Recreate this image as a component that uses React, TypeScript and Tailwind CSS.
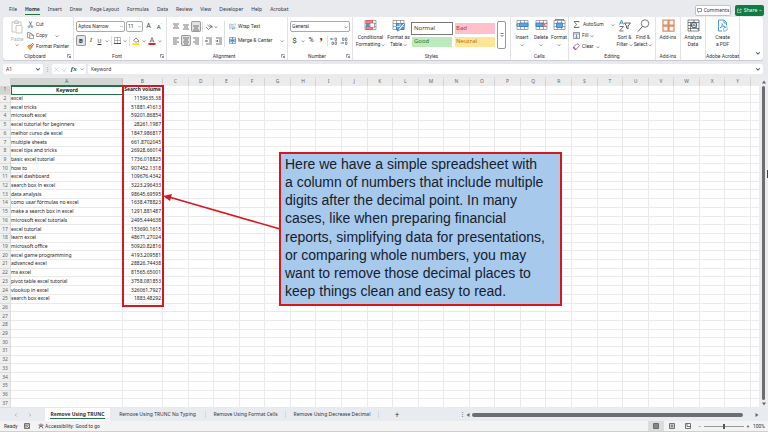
import React from "react";

const rows: [string, string][] = [
  ["excel", "1159635.38"],
  ["excel tricks", "51881.41613"],
  ["microsoft excel", "59201.86854"],
  ["excel tutorial for beginners", "28261.1987"],
  ["melhor curso de excel", "1847.986817"],
  ["multiple sheets", "661.8702045"],
  ["excel tips and tricks", "26928.66014"],
  ["basic excel tutorial", "1736.018825"],
  ["how to", "907452.1318"],
  ["excel dashboard", "109676.4342"],
  ["search box in excel", "3223.296433"],
  ["data analysis", "98645.69595"],
  ["como usar fórmulas no excel", "1638.478823"],
  ["make a search box in excel", "1291.881487"],
  ["microsoft excel tutorials", "2495.444638"],
  ["excel tutorial", "153690.1615"],
  ["learn excel", "48671.27024"],
  ["microsoft office", "50920.82816"],
  ["excel game programming", "4193.209581"],
  ["advanced excel", "28826.74438"],
  ["ms excel", "81565.65001"],
  ["pivot table excel tutorial", "3758.081853"],
  ["vlookup in excel", "326061.7927"],
  ["search box excel", "1883.48292"],
];

const letters = "CDEFGHIJKLMNOPQRSTUVWXY".split("");
const menuTabs = ["File", "Home", "Insert", "Draw", "Page Layout", "Formulas", "Data", "Review", "View", "Developer", "Help", "Acrobat"];
const noteLines = [
  "Here we have a simple spreadsheet with",
  "a column of numbers that include multiple",
  "digits after the decimal point. In many",
  "cases, like when preparing financial",
  "reports, simplifying data for presentations,",
  "or comparing whole numbers, you may",
  "want to remove those decimal places to",
  "keep things clean and easy to read.",
];

type SvgProps = { className?: string; box?: string; children: React.ReactNode };

function Svg({ className = "size-2.5", box = "0 0 20 20", children }: SvgProps) {
  return (
    <svg viewBox={box} className={`shrink-0 ${className}`} fill="none" stroke="#555" strokeWidth="1.6" aria-hidden="true">
      {children}
    </svg>
  );
}

function Caret({ className = "size-1" }: { className?: string }) {
  return (
    <Svg className={className} box="0 0 8 8">
      <path d="M1.500 3 4 5.500 6.500 3" strokeWidth="1.400" />
    </Svg>
  );
}

function Group({ className, label, launcher, children }: { className: string; label?: string; launcher?: boolean; children: React.ReactNode }) {
  return (
    <section aria-label={label} className={`flex shrink-0 flex-col border-r border-[#e3e3e3] ${className}`}>
      <div className="flex h-[35px]">{children}</div>
      <div className="flex h-2 items-center">
        <span className="flex-1 text-center whitespace-nowrap">{label}</span>
        {launcher && (
          <button aria-label={`${label} settings`} className="pr-0.5">
            <Svg className="size-1" box="0 0 10 10">
              <path d="M1 9V1h8M4 4l5 5M9 4v5H4" />
            </Svg>
          </button>
        )}
      </div>
    </section>
  );
}

function Slot({ label, className = "w-[10px]", active, children }: { label: string; className?: string; active?: boolean; children: React.ReactNode }) {
  return (
    <button
      aria-label={label}
      className={`flex h-[11px] shrink-0 items-center justify-center rounded-xs ${active ? "bg-[#e4e4e4] ring-1 ring-[#9a9a9a] ring-inset" : ""} ${className}`}
    >
      {children}
    </button>
  );
}

function Big({ icon, lines, caret, className }: { icon: React.ReactNode; lines: string[]; caret?: boolean; className: string }) {
  return (
    <button className={`flex shrink-0 flex-col items-center pt-0.5 whitespace-nowrap ${className}`}>
      {icon}
      <span className="mt-0.5 leading-[7px]">{lines[0]}</span>
      <span className="flex h-[7px] items-center gap-px leading-[7px]">
        {lines[1]}
        {caret && <Caret />}
      </span>
    </button>
  );
}

function LinesIcon({ d }: { d: string }) {
  return (
    <Svg className="size-2" box="0 0 16 16">
      <path d={d} />
    </Svg>
  );
}

function Divider() {
  return <span className="mx-px h-2.5 w-px shrink-0 bg-[#dedede]" />;
}

function TableIcon({ children }: { children?: React.ReactNode }) {
  return (
    <Svg className="size-[13px]" box="0 0 26 26">
      <path d="M2 3h22v18H2zM2 9h22M2 15h22M9 3v18M17 3v18" stroke="#777" strokeWidth="1.3" />
      {children}
    </Svg>
  );
}

function Ribbon() {
  return (
    <div className="mr-[5px] ml-[3px] flex h-[43px] rounded-[3px] bg-white font-[Roboto,sans-serif] shadow-[0_1px_1px_#c9cbd0]">
      <Group className="w-[71px]" label="Clipboard" launcher>
        <button className="flex w-6 flex-col items-center pt-[3px] pl-1 text-[#b5b5b5]" disabled>
          <Svg className="h-[14px] w-3" box="0 0 24 28">
            <path d="M8 24H2V4h18v6M7 4c0-4 8-4 8 0v3H7zM10 11h12v15H10z" stroke="#b9b9b9" />
          </Svg>
          <span className="mt-0.5">Paste</span>
          <Caret />
        </button>
        <div className="flex flex-col pt-[2px]">
          <button className="flex h-[11px] items-center gap-0.5">
            <Svg className="size-[7px]" box="0 0 16 16">
              <path d="M5 1 10 11M11 1 6 11" stroke="#555" />
              <circle cx="4.500" cy="13" r="2" stroke="#2b7cd3" />
              <circle cx="11.500" cy="13" r="2" stroke="#2b7cd3" />
            </Svg>
            Cut
          </button>
          <button className="flex h-[11px] items-center gap-0.5">
            <Svg className="size-[7px]" box="0 0 16 16">
              <path d="M5 13H1V1h5l3 2M6 4h5l4 4v7H6zM11 4v4h4" strokeWidth="1.3" />
            </Svg>
            Copy
            <span className="w-1" />
            <Caret />
          </button>
          <button className="flex h-[11px] items-center gap-0.5 whitespace-nowrap">
            <Svg className="size-[7px]" box="0 0 16 16">
              <path d="M2 7l5-3 5 5-4 5c-3 1-6-3-6-7z" fill="#f2a24a" stroke="#d9822b" />
              <path d="M8 5l5-4 2 2-4 5z" fill="#fff" stroke="#444" />
            </Svg>
            Format Painter
          </button>
        </div>
      </Group>

      <Group className="w-[93px]" label="Font" launcher>
        <div className="flex flex-col gap-[3px] pt-1 pl-0.5">
          <div className="flex h-[11px] items-center">
            <label className="relative flex w-[49px] items-center">
              <select aria-label="Font name" className="h-[11px] w-full appearance-none rounded-xs border border-[#a8a8a8] bg-white pl-px">
                <option>Aptos Narrow</option>
              </select>
              <Caret className="absolute right-0.5 size-[3px]" />
            </label>
            <label className="relative ml-px flex w-[17px] items-center">
              <select aria-label="Font size" className="h-[11px] w-full appearance-none rounded-xs border border-[#a8a8a8] bg-white pl-px">
                <option>11</option>
              </select>
              <Caret className="absolute right-0.5 size-[3px]" />
            </label>
            <Slot label="Increase font size" className="ml-0.5 w-[9px]">
              <span className="text-[7px]">A</span>
              <sup className="text-[4px] text-[#2b7cd3]">ˆ</sup>
            </Slot>
            <Slot label="Decrease font size" className="ml-px w-[9px]">
              <span className="text-[6px]">A</span>
              <sup className="text-[4px] text-[#2b7cd3]">ˇ</sup>
            </Slot>
          </div>
          <div className="flex h-[11px] items-center">
            <Slot label="Bold" active><b className="text-[6px]">B</b></Slot>
            <Slot label="Italic"><i className="font-['Liberation_Serif',serif] text-[7px]">I</i></Slot>
            <Slot label="Underline" className="w-[7px]"><u className="text-[6px]">U</u></Slot>
            <Slot label="Underline styles" className="w-[7px]"><Caret /></Slot>
            <Divider />
            <Slot label="Borders" className="w-[9px]">
              <Svg className="size-[7px]" box="0 0 14 14">
                <path d="M1 1h12v12H1zM7 1v12M1 7h12" stroke="#888" strokeWidth="1.200" />
                <path d="M0 13h14" stroke="#333" />
              </Svg>
            </Slot>
            <Slot label="Border styles" className="w-[6px]"><Caret /></Slot>
            <Divider />
            <Slot label="Fill color" className="w-[9px]">
              <Svg className="size-2" box="0 0 16 16">
                <path d="M3 7l5-5 5 5-5 4zM13 7v4" strokeWidth="1.200" />
                <path d="M1 14h14" stroke="#fff000" strokeWidth="4" />
              </Svg>
            </Slot>
            <Slot label="Fill colors" className="w-[7px]"><Caret /></Slot>
            <Slot label="Font color" className="w-[9px]">
              <Svg className="size-2" box="0 0 16 16">
                <path d="M4 11 8 1l4 10M5 8h6" strokeWidth="1.400" />
                <path d="M1 14h14" stroke="#e8202a" strokeWidth="4" />
              </Svg>
            </Slot>
            <Slot label="Font colors" className="w-[7px]"><Caret /></Slot>
          </div>
        </div>
      </Group>

      <Group className="w-[121px]" label="Alignment" launcher>
        <div className="flex w-[57px] flex-col gap-[3px] pt-1 pl-1">
          <div className="flex items-center">
            <Slot label="Top align"><LinesIcon d="M2 2h12M4 6h8M2 10h12" /></Slot>
            <Slot label="Middle align"><LinesIcon d="M2 4h12M4 8h8M2 12h12" /></Slot>
            <Slot label="Bottom align" active><LinesIcon d="M2 6h12M4 10h8M2 14h12" /></Slot>
            <Divider />
            <Slot label="Orientation">
              <Svg className="size-2" box="0 0 16 16">
                <path d="M2 8l4 4M5 4l6 5M9 3l3 4M6 14l8-8M14 10V6h-4" strokeWidth="1.300" />
              </Svg>
            </Slot>
            <Slot label="Orientation options" className="w-1"><Caret /></Slot>
          </div>
          <div className="flex items-center">
            <Slot label="Align left"><LinesIcon d="M2 2h12M2 6h8M2 10h12M2 14h8" /></Slot>
            <Slot label="Center" active><LinesIcon d="M2 2h12M4 6h8M2 10h12M4 14h8" /></Slot>
            <Slot label="Align right"><LinesIcon d="M2 2h12M6 6h8M2 10h12M6 14h8" /></Slot>
            <Divider />
            <Slot label="Decrease indent">
              <LinesIcon d="M2 2h12M8 6h6M8 10h6M2 14h12M6 8H1M3 6 1 8l2 2" />
            </Slot>
            <Slot label="Increase indent">
              <LinesIcon d="M2 2h12M8 6h6M8 10h6M2 14h12M1 8h5M4 6l2 2-2 2" />
            </Slot>
          </div>
        </div>
        <div className="mt-1 flex h-[26px] flex-1 flex-col gap-[3px] border-l border-[#dedede] pl-1">
          <button className="flex h-[11px] items-center gap-0.5">
            <Svg className="size-[7px]" box="0 0 16 16">
              <path d="M2 1v14M14 1v5" stroke="#777" strokeWidth="1.200" />
              <path d="M4 4h7M4 9h7c4 0 4 4 0 4H7M9 11l-2 2 2 2" stroke="#2b7cd3" strokeWidth="1.400" />
            </Svg>
            Wrap Text
          </button>
          <button className="flex h-[11px] items-center gap-0.5 whitespace-nowrap">
            <Svg className="size-[7px]" box="0 0 16 16">
              <path d="M1 1h14v14H1z" stroke="#777" strokeWidth="1.400" />
              <path d="M1 5h14v6H1z" fill="#a8d0f0" stroke="#2b7cd3" strokeWidth="1.200" />
              <path d="M4 8h8M8 1v4M8 11v4" stroke="#2b6ca3" />
            </Svg>
            Merge &amp; Center
            <span className="w-1" />
            <Caret />
          </button>
        </div>
      </Group>

      <Group className="w-[65px]" label="Number" launcher>
        <div className="flex flex-1 flex-col gap-[3px] px-0.5 pt-1">
          <label className="relative flex items-center">
            <select aria-label="Number format" className="h-[11px] w-full appearance-none rounded-xs border border-[#a8a8a8] bg-white pl-px">
              <option>General</option>
            </select>
            <Caret className="absolute right-0.5 size-1" />
          </label>
          <div className="flex items-center">
            <Slot label="Currency" className="w-[9px]"><span className="text-[8px]">$</span></Slot>
            <Slot label="Currency formats" className="w-[7px]"><Caret /></Slot>
            <Slot label="Percent"><span className="text-[7px]">%</span></Slot>
            <Slot label="Comma style"><b className="pt-1 font-['Liberation_Serif',serif] text-[12px]">’</b></Slot>
            <Divider />
            <Slot label="Increase decimal">
              <Svg className="size-2" box="0 0 16 16">
                <path d="M1 4h6M3 2 1 4l2 2" stroke="#2b7cd3" />
                <path d="M10 2h3v5h-3zM4 10h3v5H4zM10 10h3v5h-3z" strokeWidth="1.200" />
              </Svg>
            </Slot>
            <Slot label="Decrease decimal">
              <Svg className="size-2" box="0 0 16 16">
                <path d="M1 12h6M5 10l2 2-2 2" stroke="#2b7cd3" />
                <path d="M5 2h3v5H5zM11 2h3v5h-3zM11 10h3v5h-3z" strokeWidth="1.200" />
              </Svg>
            </Slot>
          </div>
        </div>
      </Group>

      <Group className="w-[158px]" label="Styles">
        <Big
          className="w-[33px] pl-0.5"
          lines={["Conditional", "Formatting"]}
          caret
          icon={
            <TableIcon>
              <path d="M4 3h13v6H4zM4 15h13v6H4z" fill="#f3808c" stroke="#e0505f" />
              <path d="M4 9h7v6H4z" fill="#4f8fd0" stroke="none" />
              <path d="M12 8h9v9h-9z" fill="#fff" strokeWidth="1" />
            </TableIcon>
          }
        />
        <Big
          className="w-[25px]"
          lines={["Format as", "Table"]}
          caret
          icon={
            <TableIcon>
              <path d="M9 9h15v12H9z" fill="#5aa5e6" stroke="#2b7cd3" />
              <path d="M9 15h15M16 9v12" stroke="#fff" />
              <path d="M23 8 14 18l-4 6 7-3 8-10z" fill="#fff" stroke="#2b6ca3" />
            </TableIcon>
          }
        />
        <div className="mt-1 flex h-[28px]">
          <div className="grid w-[86px] grid-cols-2 grid-rows-2 gap-px py-px pr-px font-['Open_Sans',sans-serif] text-[6px]">
            <button className="border border-[#777] bg-white pl-0.5 text-left">Normal</button>
            <button className="m-px bg-[#ffc0ca] pl-px text-left text-[#b0303f]">Bad</button>
            <button className="m-px bg-[#bdebbd] pl-0.5 text-left text-[#23702d]">Good</button>
            <button className="m-px bg-[#ffe697] pl-px text-left text-[#a86a10]">Neutral</button>
          </div>
          <button aria-label="More styles" className="flex w-[9px] items-center justify-center rounded-xs border border-[#999]">
            <Svg className="size-1" box="0 0 8 8">
              <path d="M1 1h6M1 4l3 3 3-3" />
            </Svg>
          </button>
        </div>
      </Group>

      <Group className="w-[58px]" label="Cells">
        <Big className="w-[21px] pl-px" lines={["Insert", ""]} caret icon={
          <TableIcon>
            <path d="M7 8h17v7H7z" fill="#5aa5e6" stroke="#2b7cd3" />
            <path d="M8 12H1M4 9l-3 3 3 3" stroke="#2b7cd3" />
          </TableIcon>
        } />
        <Big className="w-[18px]" lines={["Delete", ""]} caret icon={
          <TableIcon>
            <path d="M2 8h13v7H2z" fill="#5aa5e6" stroke="#2b7cd3" />
            <path d="M15 7l8 9M23 7l-8 9" stroke="#e0505f" strokeWidth="2" />
          </TableIcon>
        } />
        <Big className="w-[18px]" lines={["Format", ""]} caret icon={
          <TableIcon>
            <path d="M7 8h12v9H7z" fill="#5aa5e6" stroke="#2b7cd3" />
            <path d="M5 1h16M5 0v3M21 0v3" stroke="#2b7cd3" />
          </TableIcon>
        } />
      </Group>

      <Group className="w-[87px]" label="Editing">
        <div className="flex w-[46px] flex-col pt-0.5 pl-1">
          <button className="flex h-[11px] items-center gap-[3px]">
            <Svg className="size-[7px]" box="0 0 14 14">
              <path d="M12 3V1H2l5 6-5 6h10v-2" />
            </Svg>
            AutoSum
            <span className="w-1" />
            <Caret />
          </button>
          <button className="flex h-[11px] items-center gap-0.5">
            <Svg className="size-[7px]" box="0 0 14 14">
              <path d="M1 1h12v12H1zM1 4h12" strokeWidth="1.200" />
              <path d="M7 5v6M4 9l3 3 3-3" stroke="#2b7cd3" />
            </Svg>
            Fill
            <Caret />
          </button>
          <button className="flex h-[11px] items-center gap-0.5">
            <Svg className="size-[7px]" box="0 0 14 14">
              <path d="M1 8l7-7 5 4-7 8H4z" fill="#fff" stroke="#a040a0" />
              <path d="M1 8l5 5H4L1 10z" fill="#d070d0" stroke="#a040a0" />
            </Svg>
            Clear
            <Caret />
          </button>
        </div>
        <Big className="w-[19px]" lines={["Sort &", "Filter"]} caret icon={
          <Svg className="size-[13px]" box="0 0 26 26">
            <path d="M3 11 7 2l4 9M4 8h6" stroke="#2b7cd3" />
            <path d="M3 15h8l-8 9h8" stroke="#555" />
            <path d="M13 8h12l-5 6v6l-3-2v-4z" strokeWidth="1.800" />
          </Svg>
        } />
        <Big className="w-[18px]" lines={["Find &", "Select"]} caret icon={
          <Svg className="size-[13px]" box="0 0 26 26">
            <circle cx="16" cy="9" r="7.500" />
            <path d="M11 15 2 25" strokeWidth="2" />
          </Svg>
        } />
      </Group>

      <Group className="w-[25px]" label="Add-ins">
        <Big className="w-[24px]" lines={["Add-ins", ""]} icon={
          <Svg className="size-[13px]" box="0 0 26 26">
            <path d="M2 2h10v10H2zM14 2h10v10H14zM2 14h10v10H2zM14 14h10v10H14z" stroke="#e08a62" strokeWidth="2.500" />
          </Svg>
        } />
      </Group>
      <Group className="w-[25px]">
        <Big className="w-[24px]" lines={["Analyze", "Data"]} icon={
          <Svg className="size-[13px]" box="0 0 26 26">
            <path d="M2 2h22v22H2zM2 7h22M7 7v17M2 13h8M2 19h22M14 2v5" strokeWidth="1.400" />
            <circle cx="14" cy="12" r="5.500" fill="#cfe6f8" stroke="#333" />
            <path d="M18 16l6 7M12 14v-3M14 14V9M16 14v-2" stroke="#2b6ca3" />
          </Svg>
        } />
      </Group>
      <Group className="w-[34px]" label="Adobe Acrobat">
        <Big className="w-[33px]" lines={["Create", "a PDF"]} icon={
          <Svg className="size-[13px]" box="0 0 26 26">
            <path d="M12 24H5V2h11l5 5v6M16 2v6h5" stroke="#3d8ee0" strokeWidth="1.800" />
            <path d="M8 18c4-3 5-6 4-9 1 5 3 6 6 6-4 0-7 1-10 3z" stroke="#3d8ee0" strokeWidth="1.400" />
            <path d="M15 21c0-4 4-5 8-5M14 24c3 0 8 1 9-5" stroke="#3d8ee0" />
          </Svg>
        } />
      </Group>
      <button aria-label="Collapse ribbon" className="ml-auto self-end pr-0.5 pb-1">
        <Caret className="size-[6px]" />
      </button>
    </div>
  );
}

function Sheet() {
  const cols = "grid grid-cols-[11px_112px_40px_repeat(23,minmax(0,1fr))_8px]";
  const head = "block border-r border-[#d2d2d2] text-center font-normal text-[#666]";
  return (
    <div className="relative flex min-w-0 flex-1 flex-col">
      <table className="grid flex-1 grid-rows-[8px_minmax(0,1fr)] text-[5px] leading-[7px]">
        <thead className="grid">
          <tr className={`${cols} border-b border-[#c4c4c4] bg-[#ececec]`}>
            <th className={head} aria-label="Select all" />
            <th className="block border-r border-b border-[#c4c4c4] border-b-[#217346] bg-[#d3d5d4] text-center font-normal text-[#217346]">A</th>
            <th className={head}>B</th>
            {letters.map((l) => (
              <th key={l} className={head}>{l}</th>
            ))}
            <th className="block" />
          </tr>
        </thead>
        <tbody className="grid auto-rows-fr bg-white text-[#222]">
          {Array.from({ length: 37 }, (_, i) => {
            const data = i > 0 ? rows[i - 1] : undefined;
            return (
              <tr key={i} className={cols}>
                <th className={`flex items-center justify-center border-r border-b border-[#dcdcdc] font-normal text-[#666] ${i === 0 ? "bg-[#d3d5d4]" : "bg-[#f0f0f0]"}`}>{i + 1}</th>
                {i === 0 ? (
                  <td className="flex items-center justify-center font-bold outline-1 -outline-offset-1 outline-[#217346]">Keyword</td>
                ) : (
                  <td className="flex items-center border-r border-b border-[#eaeaea]">{data?.[0]}</td>
                )}
                {i === 0 ? (
                  <td className="flex items-center justify-center border-r border-b border-[#eaeaea] font-bold whitespace-nowrap">Search volume</td>
                ) : (
                  <td className="flex items-center justify-end border-r border-b border-[#eaeaea] pr-px">{data?.[1]}</td>
                )}
                {letters.map((l) => (
                  <td key={l} className="block border-r border-b border-[#eaeaea]" />
                ))}
                <td className="block border-b border-[#eaeaea]" />
              </tr>
            );
          })}
        </tbody>
      </table>

      {/* Highlight frame, pointer and note floating over the cells */}
      <div className="absolute inset-x-0 top-2 bottom-0">
        <div className="absolute -top-px left-[122px] h-[69%] w-[42px] border-2 border-[#d8161e]" />
        <svg viewBox="0 0 120 40" className="absolute top-[106px] left-[162px] h-10 w-[120px]" aria-hidden="true">
          <path d="M7 5 118 37" stroke="#d8161e" strokeWidth="1.600" />
          <path d="M1 4l9-2-2 7z" fill="#d8161e" />
        </svg>
        <aside className="absolute top-[66px] left-[279px] grid h-[154px] w-[283px] auto-rows-fr border-2 border-[#d8161e] bg-[#a6c9ec] pt-px pb-[3px] pl-1 font-['Liberation_Sans',Arial,sans-serif] text-[14px] text-[#16202c]">
          {noteLines.map((line) => (
            <span key={line} className="flex items-center whitespace-nowrap">{line}</span>
          ))}
        </aside>
      </div>
    </div>
  );
}

function Arrow({ d }: { d: string }) {
  return (
    <svg viewBox="0 0 8 8" className="size-1 shrink-0" aria-hidden="true">
      <path d={d} fill="#666" />
    </svg>
  );
}

export default function App() {
  return (
    <div className="flex min-h-screen w-full flex-col overflow-hidden bg-[#e8eaee] font-['Noto_Sans','Open_Sans',sans-serif] text-[5px] leading-[7px] text-[#333]">
      <header className="flex h-[17px] items-center pt-[3px] pr-1">
        <nav className="flex items-center gap-2 pl-[9px]" aria-label="Ribbon tabs">
          {menuTabs.map((t) => (
            <button key={t} className={`flex h-2.5 items-center border-b whitespace-nowrap ${t === "Home" ? "border-[#217346] font-bold" : "border-transparent"}`}>
              {t}
            </button>
          ))}
        </nav>
        <div className="ml-auto flex items-center gap-1">
          <button className="flex h-[11px] w-9 items-center justify-center gap-0.5 rounded-xs border border-[#c2c2c2] bg-white">
            <Svg className="size-[5px]" box="0 0 10 10"><path d="M1 1h8v6H5L3 9V7H1z" strokeWidth="1.200" /></Svg>
            Comments
          </button>
          <button className="flex h-[11px] w-[29px] items-center justify-center gap-0.5 rounded-xs bg-[#107c41] text-white">
            <svg viewBox="0 0 10 10" className="size-[5px]" fill="none" stroke="#fff" aria-hidden="true"><path d="M4 2H1v7h7V6M4 6c0-3 2-3 5-3M7 1l2 2-2 2" /></svg>
            Share
            <svg viewBox="0 0 8 8" className="size-[3px]" fill="none" stroke="#fff" aria-hidden="true"><path d="M1 2.500 4 5.500 7 2.500" strokeWidth="1.500" /></svg>
          </button>
        </div>
      </header>

      <Ribbon />

      <div className="mt-1 mr-[5px] ml-[3px] flex h-[10px] items-center">
        <label className="relative flex w-10 items-center">
          <input aria-label="Name box" defaultValue="A1" className="h-[10px] w-full rounded-xs bg-white pl-[3px]" />
          <Caret className="absolute right-0.5 size-[6px]" />
        </label>
        <span className="flex w-[9px] justify-center text-[#888]">⋮</span>
        <div className="flex h-[10px] w-[34px] items-center justify-around rounded-xs bg-white">
          <Svg className="size-[5px]" box="0 0 10 10"><path d="M1 1l8 8M9 1 1 9" stroke="#bbb" strokeWidth="1.200" /></Svg>
          <Svg className="size-[5px]" box="0 0 10 10"><path d="M1 5l3 4 5-8" stroke="#bbb" strokeWidth="1.200" /></Svg>
          <i className="font-['Liberation_Serif',serif] text-[7px] font-bold">fx</i>
          <Caret />
        </div>
        <label className="relative ml-0.5 flex flex-1 items-center">
          <input aria-label="Formula bar" defaultValue="Keyword" className="h-[10px] w-full rounded-xs bg-white pl-[3px]" />
          <Caret className="absolute right-0.5 size-[6px]" />
        </label>
      </div>

      <div className="mt-1 flex flex-1">
        <Sheet />
        <div className="relative flex w-[9px] flex-col items-center gap-0.5 bg-[#ebedf0] py-0.5">
          <Arrow d="M4 1 8 7H0z" />
          <div className="w-[3px] flex-1 rounded-full bg-[#6e6e6e]" />
          <Arrow d="M0 1h8L4 7z" />
          <span className="absolute top-[92px] right-0 h-2 w-px bg-[#444]" />
        </div>
      </div>

      <div className="flex h-[13px] items-center bg-[#e8ebf0]">
        <div className="flex w-[45px] justify-center gap-2.5">
          <Svg className="size-1" box="0 0 8 8"><path d="M5.500 1 2.500 4l3 3" stroke="#aaa" /></Svg>
          <Svg className="size-1" box="0 0 8 8"><path d="M2.500 1l3 3-3 3" stroke="#aaa" /></Svg>
        </div>
        <div className="flex h-full w-[65px] items-center justify-center bg-white">
          <button className="border-b border-[#217346] font-bold whitespace-nowrap">Remove Using TRUNC</button>
        </div>
        <button className="w-24 border-r border-[#d6d9de] whitespace-nowrap">Remove Using TRUNC No Typing</button>
        <button className="w-20 border-r border-[#d6d9de] whitespace-nowrap">Remove Using Format Cells</button>
        <button className="w-[93px] border-r border-[#d6d9de] whitespace-nowrap">Remove Using Decrease Decimal</button>
        <button aria-label="New sheet" className="w-9 text-[8px]">+</button>
        <span className="ml-auto w-2 text-center">⋮</span>
        <div className="flex w-[302px] items-center gap-0.5 pr-[9px]">
          <Arrow d="M7 0v8L1 4z" />
          <div className="h-1 w-[271px] rounded-full bg-[#6e6e6e]" />
          <span className="flex-1" />
          <Arrow d="M1 0l6 4-6 4z" />
        </div>
      </div>

      <footer className="flex h-[11px] items-center border-b border-[#cfcfcf] bg-[#f3f3f3] pr-[3px] pl-1 font-[Roboto,sans-serif]">
        <span className="w-5">Ready</span>
        <Svg className="size-1.5" box="0 0 12 12"><path d="M1 1h10v10H1zM1 4h10M4 4v7M6 6l4 4" /></Svg>
        <Svg className="mr-px ml-2 size-1.5" box="0 0 12 12"><path d="M6 1v2M1 4h10M4 4v3l-2 4M8 4v3l2 4M4 7h4" /></Svg>
        Accessibility: Good to go
        <div className="ml-auto flex items-center">
          <button aria-label="Normal view" className="flex h-[10px] w-4 items-center justify-center bg-[#dcdcdc]">
            <Svg className="size-1.5" box="0 0 12 12"><path d="M1 1h10v10H1zM1 4h10M1 8h10M4 1v10M8 1v10" /></Svg>
          </button>
          <button aria-label="Page layout view" className="flex w-4 justify-center">
            <Svg className="size-1.5" box="0 0 12 12"><path d="M1 1h10v10H1zM3 4h6M3 6h6M3 8h6" /></Svg>
          </button>
          <button aria-label="Page break view" className="flex w-4 justify-center">
            <Svg className="size-1.5" box="0 0 12 12"><path d="M1 1h10v10H1zM4 1v6h7" /></Svg>
          </button>
          <button aria-label="Zoom out" className="w-2">−</button>
          <input
            type="range"
            aria-label="Zoom"
            defaultValue={50}
            className="h-[5px] w-10 appearance-none bg-[linear-gradient(#999,#999)] bg-[length:100%_1px] bg-center bg-no-repeat [&::-webkit-slider-thumb]:h-[5px] [&::-webkit-slider-thumb]:w-0.5 [&::-webkit-slider-thumb]:appearance-none [&::-webkit-slider-thumb]:bg-[#555]"
          />
          <button aria-label="Zoom in" className="w-2">+</button>
          <span className="w-[13px] text-right">100%</span>
        </div>
      </footer>
    </div>
  );
}
